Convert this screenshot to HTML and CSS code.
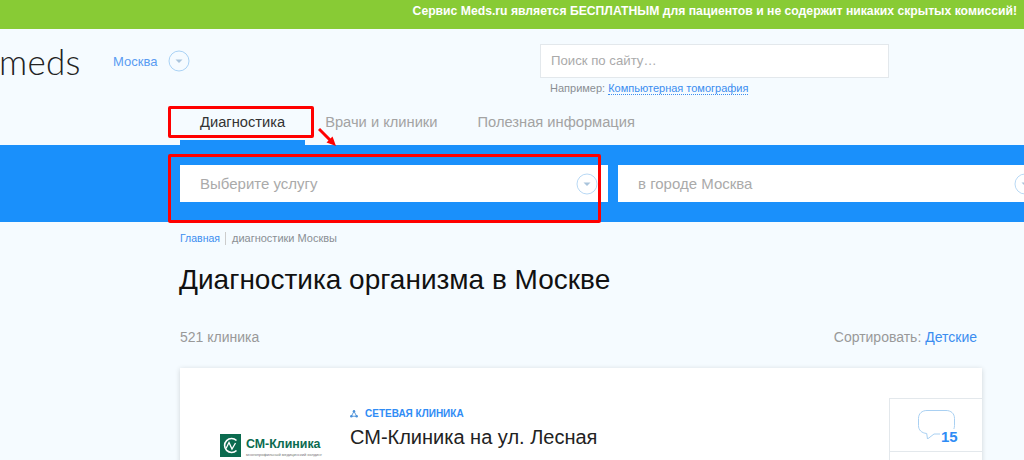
FILE: index.html
```html
<!DOCTYPE html>
<html lang="ru">
<head>
<meta charset="UTF-8">
<meta name="viewport" content="width=device-width, initial-scale=1.0">
<title>Диагностика организма в Москве</title>
<link rel="stylesheet" href="styles.css">
</head>
<body>
<div class="page">
  <div class="topbar">Сервис Meds.ru является БЕСПЛАТНЫМ для пациентов и не содержит никаких скрытых комиссий!</div>
  <header class="head">
    <div class="head-row">
      <div class="logo">meds</div>
      <div class="city">
        <a href="#">Москва</a>
        <svg class="arrow-btn" viewBox="0 0 22 22"><circle cx="11" cy="11" r="10" fill="none" stroke="#a9d2f5"/><path d="M7.500 9.500h7L11 13z" fill="#a9c4dc"/></svg>
      </div>
      <div class="search">
        <div class="search-box">Поиск по сайту…</div>
        <p class="search-hint">Например: <a href="#">Компьютерная томография</a></p>
      </div>
    </div>
    <nav class="tabs">
      <a class="tab tab-active" href="#">Диагностика</a>
      <a class="tab" href="#">Врачи и клиники</a>
      <a class="tab" href="#">Полезная информация</a>
    </nav>
  </header>
  <div class="band">
    <div class="field field-service">
      <span>Выберите услугу</span>
      <svg class="arrow-btn" viewBox="0 0 22 22"><circle cx="11" cy="11" r="10" fill="none" stroke="#b9d9f5"/><path d="M7.500 9.500h7L11 13z" fill="#a9c4dc"/></svg>
    </div>
    <div class="field field-city">
      <span>в городе Москва</span>
      <svg class="arrow-btn" viewBox="0 0 22 22"><circle cx="11" cy="11" r="10" fill="none" stroke="#b9d9f5"/><path d="M7.500 9.500h7L11 13z" fill="#a9c4dc"/></svg>
    </div>
  </div>
  <main class="content">
    <div class="crumbs"><a href="#">Главная</a><span>диагностики Москвы</span></div>
    <h1>Диагностика организма в Москве</h1>
    <div class="list-head">
      <span>521 клиника</span>
      <span class="sort">Сортировать: <a href="#">Детские</a></span>
    </div>
    <article class="card">
      <div class="clinic-logo">
        <svg class="clinic-mark" viewBox="0 0 21 23"><rect width="21" height="23" fill="#0b6b4f"/><path d="M16.500 6.500A7 7 0 1 0 16.500 16.500" fill="none" stroke="#fff" stroke-width="1.600"/><path d="M6 14.500l3-6 3 6.500 3.500-6" fill="none" stroke="#fff" stroke-width="1.300"/></svg>
        <div>
          <div class="clinic-name">СМ-Клиника</div>
          <div class="clinic-sub">многопрофильный медицинский холдинг</div>
        </div>
      </div>
      <div class="card-body">
        <div class="net">
          <svg class="net-icon" viewBox="0 0 9 9"><path d="M4.500 1.500L7.500 7H1.500z" fill="none" stroke="#4a90d9"/><circle cx="4.500" cy="1.500" r="1.400" fill="#4a90d9"/><circle cx="1.500" cy="7" r="1.400" fill="#4a90d9"/><circle cx="7.500" cy="7" r="1.400" fill="#4a90d9"/></svg>
          СЕТЕВАЯ КЛИНИКА
        </div>
        <h2>СМ-Клиника на ул. Лесная</h2>
      </div>
      <div class="side">
        <div class="reviews">
          <svg class="bubble" viewBox="0 0 37 29"><path d="M9 .5h19c5 0 8.500 3 8.500 8v7c0 5-3.500 8.500-8.500 8.500H16l-6.500 5-.8-5.500C3.500 23 .5 20 .5 15.500v-7c0-5 3.500-8 8.500-8z" fill="#fff" stroke="#a9d0f2"/></svg>
          <span class="reviews-num">15</span>
        </div>
      </div>
    </article>
  </main>
  <div class="mark mark-tab"></div>
  <div class="mark mark-field"></div>
  <svg class="mark-arrow" viewBox="0 0 20 20"><path d="M1 2l12 12" stroke="#f00" stroke-width="3" fill="none"/><path d="M18 19L8.500 15.500 14.500 9.500z" fill="#f00"/></svg>
</div>
</body>
</html>
```

FILE: styles.css
```css
html, body { margin:0; height:100%; overflow:hidden; }
body { font-family:'Liberation Sans',Arial,sans-serif; background:#f5fbff; color:#222; }
a { color:#3b8df0; text-decoration:none; }
.page { position:relative; width:1024px; height:460px; overflow:hidden; }

.topbar { height:29px; line-height:22px; background:#88cb35; color:#fff; font-size:12.2px; font-weight:bold; text-align:right; padding-right:7px; }

.head { height:116px; display:flex; flex-direction:column; justify-content:space-between; }
.head-row { display:flex; padding-top:15px; }
.logo { width:114px; margin-left:-1px; font-family:'Lato',sans-serif; font-weight:300; font-size:35px; letter-spacing:.3px; line-height:34px; color:#222; }
.city { width:427px; height:34px; display:flex; align-items:center; gap:11px; font-size:13px; }
.city a { color:#5a9cf2; }
.arrow-btn { width:22px; height:22px; display:block; flex:none; }
.search { width:349px; }
.search-box { height:32px; line-height:32px; background:#fff; border:1px solid #e3e8ec; padding-left:10px; font-size:13.2px; color:#aaa; }
.search-hint { margin:3px 0 0 10px; font-size:11px; line-height:14px; color:#8a8f94; }
.search-hint a { border-bottom:1px dotted #3b8df0; }

.tabs { display:flex; margin-left:180px; }
.tab { padding:0 20px; height:30px; line-height:25px; font-size:14.7px; color:#a3a3a3; border-bottom:5px solid transparent; }
.tab-active { color:#333; border-bottom-color:#1a90fb; }

.band { height:77px; box-sizing:border-box; padding:20px 0 20px 180px; background:#1a90fb; display:flex; gap:10px; }
.field { height:37px; flex:none; box-sizing:border-box; background:#fff; display:flex; align-items:center; justify-content:space-between; padding:0 10px 0 20px; font-size:15px; color:#aaa; }
.field-service { width:428px; }
.field-city { width:428px; }

.content { padding-left:180px; }
.crumbs { margin-top:10px; height:13px; line-height:13px; font-size:11px; color:#8a8f94; display:flex; }
.crumbs a { font-size:10.5px; padding-right:5px; border-right:1px solid #ccc; margin-right:6px; }
h1 { margin:20px 0 0 -1px; font-size:28px; font-weight:normal; line-height:30px; color:#111; }
.list-head { margin-top:34px; width:797px; display:flex; justify-content:space-between; font-size:14px; line-height:16px; color:#999; }
.card { margin-top:23px; width:802px; height:200px; background:#fff; box-shadow:0 1px 5px rgba(0,0,0,.16); display:flex; }
.clinic-logo { width:100px; margin:66px 30px 0 40px; display:flex; gap:5px; align-items:flex-start; }
.clinic-mark { width:21px; height:23px; flex:none; }
.clinic-name { font-size:12.4px; font-weight:bold; line-height:16px; color:#0b6b4f; white-space:nowrap; margin-top:2px; }
.clinic-sub { font-size:4px; line-height:5px; color:#777; white-space:nowrap; }
.card-body { width:539px; padding-top:40px; }
.net { font-size:10px; line-height:12px; color:#2f8cf5; font-weight:bold; display:flex; align-items:center; gap:7px; }
.net-icon { width:8px; height:8px; }
h2 { margin:5px 0 0; font-size:20px; font-weight:normal; line-height:24px; color:#222; }
.side { width:93px; margin-top:30px; box-sizing:border-box; border-left:1px solid #e3e8ec; }
.reviews { position:relative; height:52px; border:solid #e3e8ec; border-width:1px 0; }
.bubble { position:absolute; left:28px; top:11px; width:37px; height:29px; }
.reviews-num { position:absolute; left:50px; top:30px; background:#fff; padding-left:1px; font-size:15px; font-weight:bold; line-height:16px; color:#2f8cf5; }

/* красная разметка поверх скриншота */
.mark { position:absolute; box-sizing:border-box; border:3px solid #f00; border-radius:2px; }
.mark-tab { left:168px; top:106px; width:146px; height:32px; }
.mark-field { left:168px; top:154px; width:433px; height:69px; }
.mark-arrow { position:absolute; left:318px; top:127px; width:20px; height:20px; }
```
